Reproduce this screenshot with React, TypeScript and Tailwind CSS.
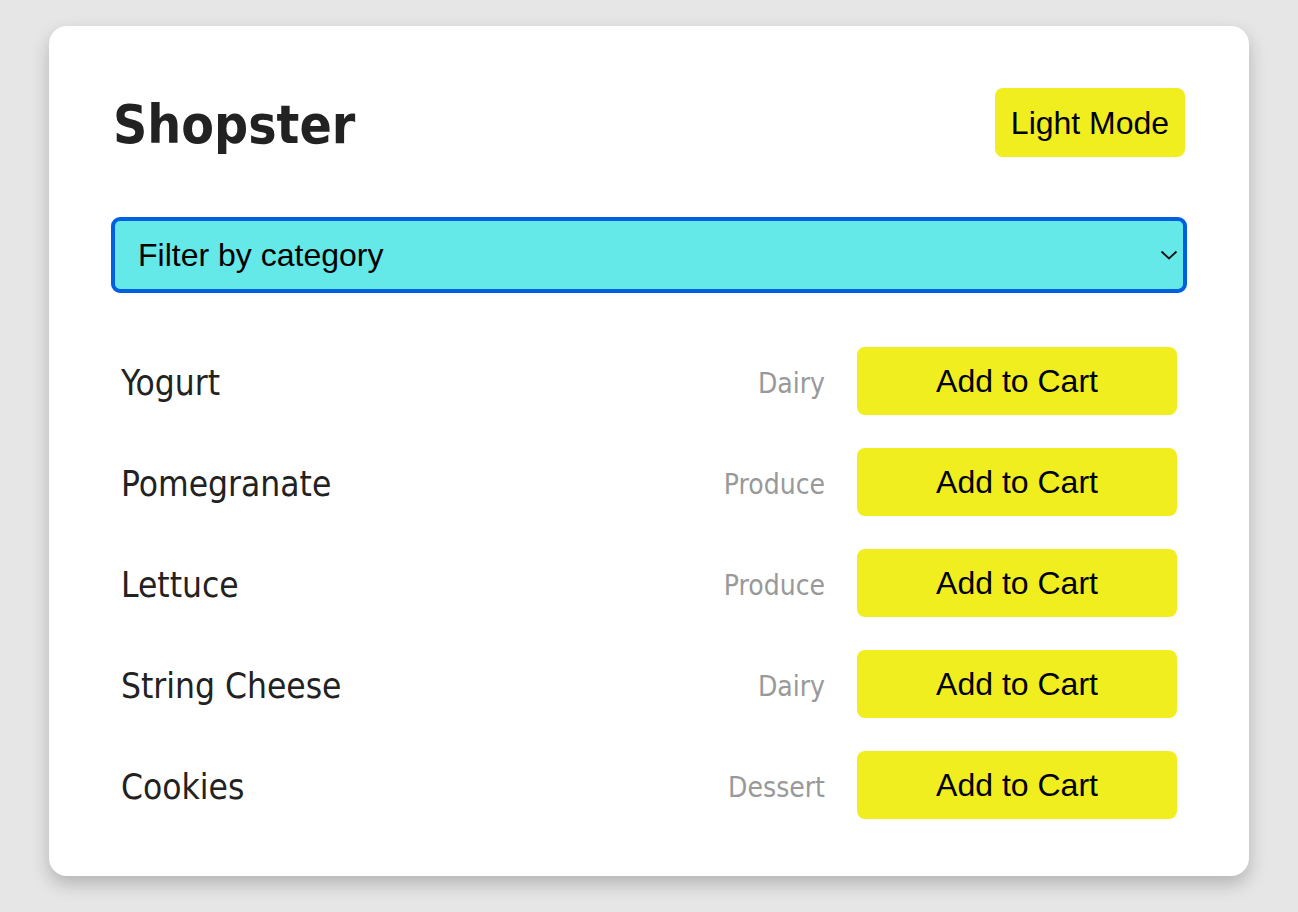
import { useState } from "react";

type Item = { name: string; category: string };

const ITEMS: Item[] = [
  { name: "Yogurt", category: "Dairy" },
  { name: "Pomegranate", category: "Produce" },
  { name: "Lettuce", category: "Produce" },
  { name: "String Cheese", category: "Dairy" },
  { name: "Cookies", category: "Dessert" },
];

const tahoma = { fontFamily: '"DejaVu Sans Condensed", "DejaVu Sans", sans-serif' };
const arial = { fontFamily: '"Liberation Sans", Arial, sans-serif' };

export default function App() {
  const [cat, setCat] = useState("");

  const visibles = ITEMS.filter((i) => !cat || i.category === cat);

  return (
    <div className="min-h-screen bg-[#e6e6e6] pt-[26px] pl-[49px]" style={tahoma}>
      <div className="w-[1200px] h-[850px] rounded-[18px] bg-white px-[62px] pt-[62px] shadow-[0_8px_18px_rgba(0,0,0,0.22)]">
        <header className="flex h-[69px] items-center justify-between">
          <h1 className="pl-[2px] pt-[4px] text-[53px] font-bold leading-none text-[#222]">Shopster</h1>
          <button
            type="button"
            className="mr-[2px] h-[69px] w-[190px] rounded-[8px] bg-[#f0ee1f] text-[32px] text-black"
            style={arial}
          >
            Light Mode
          </button>
        </header>

        <div className="relative mt-[60px]">
          <select
            value={cat}
            onChange={(e) => setCat(e.target.value)}
            className="h-[76px] w-full appearance-none rounded-[9px] border-[4px] border-[#0060df] bg-[#64e8e8] pl-[23px] text-[32px] text-black outline-none"
            style={arial}
          >
            <option value="">Filter by category</option>
            <option value="Dairy">Dairy</option>
            <option value="Produce">Produce</option>
            <option value="Dessert">Dessert</option>
          </select>
          <svg
            className="pointer-events-none absolute right-[9px] top-[33px]"
            width="18"
            height="10"
            viewBox="0 0 18 10"
            fill="none"
          >
            <path d="M1.5 1.5 L9 8.5 L16.5 1.5" stroke="#111" strokeWidth="1.8" />
          </svg>
        </div>

        <ul className="mt-[54px] flex flex-col gap-[33px] px-[10px]">
          {visibles.map((i) => (
            <li key={i.name} className="flex h-[68px] items-center">
              <span className="flex-1 pt-[4px] text-[35px] text-[#222]">{i.name}</span>
              <span className="mr-[32px] pt-[5px] text-[28px] text-[#999]">{i.category}</span>
              <button
                type="button"
                className="h-[68px] w-[320px] rounded-[8px] bg-[#f0ee1f] text-[32px] text-black"
                style={arial}
              >
                Add to Cart
              </button>
            </li>
          ))}
        </ul>
      </div>
    </div>
  );
}
